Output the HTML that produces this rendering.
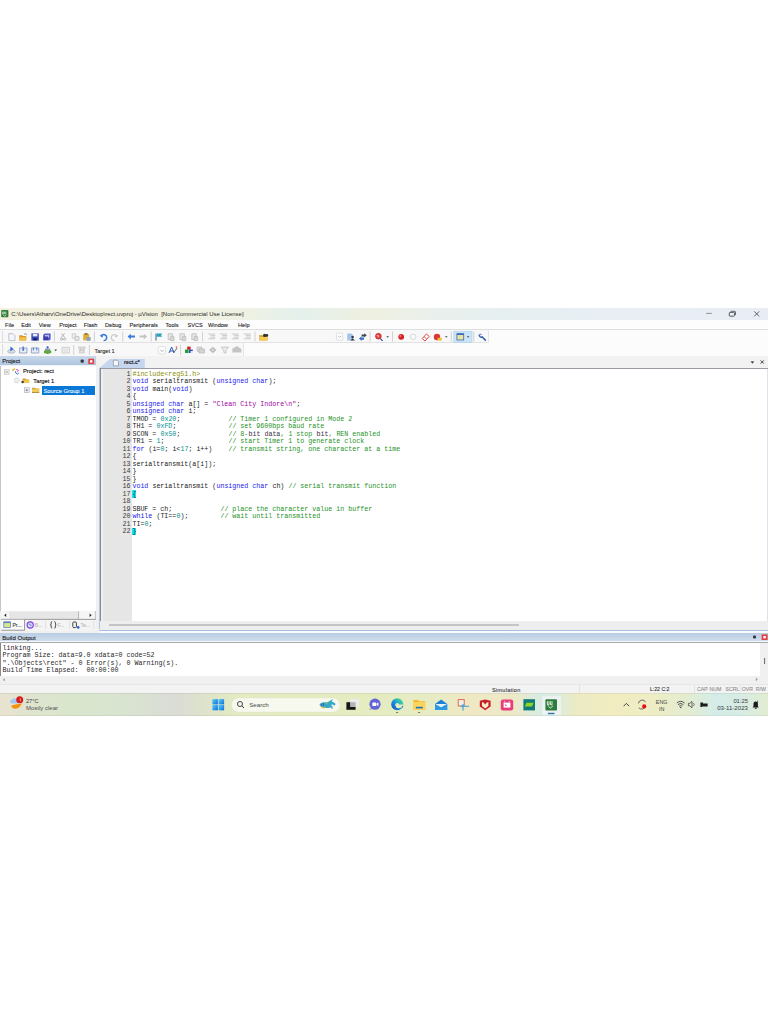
<!DOCTYPE html>
<html><head><meta charset="utf-8">
<style>
*{margin:0;padding:0;box-sizing:border-box}
html,body{width:768px;height:1024px;background:#fff;overflow:hidden}
body{position:relative}
.a{position:absolute}
.t{position:absolute;white-space:pre}
.t.s{-webkit-text-stroke:0.08px currentColor}
svg{position:absolute;overflow:visible}
</style></head><body>
<div class="a" style="left:0px;top:308px;width:768px;height:12px;background:linear-gradient(90deg,#f3f0e0 0.00%,#f2f0de 16.93%,#eef2e4 32.55%,#e4f0ec 39.06%,#eff0e0 48.18%,#eaf0ec 55.99%,#e6eff0 65.10%,#e8eef4 78.12%,#e8edf5 100.00%)"></div>
<div class="a" style="left:0px;top:320px;width:768px;height:9px;background:#fdfdfd"></div>
<div class="a" style="left:0px;top:329px;width:768px;height:1px;background:#dedede"></div>
<div class="a" style="left:0px;top:330px;width:768px;height:27px;background:#fcfcfc"></div>
<div class="a" style="left:0px;top:330px;width:489px;height:13px;background:#f8f8f8;border-right:1px solid #e6e6e6;border-bottom:1px solid #e2e2e2"></div>
<div class="a" style="left:0px;top:343px;width:244px;height:14px;background:#f8f8f8;border-right:1px solid #e6e6e6;border-bottom:1px solid #e2e2e2"></div>
<div class="a" style="left:0px;top:356px;width:768px;height:1px;background:#d2d2d2"></div>
<div class="a" style="left:0px;top:356px;width:768px;height:277px;background:#f0f0f0"></div>
<div class="a" style="left:0px;top:356px;width:96px;height:9px;background:linear-gradient(#cad8ea,#aec6e0)"></div>
<div class="a" style="left:0px;top:365px;width:96px;height:1px;background:#eef2f8"></div>
<div class="a" style="left:0px;top:366px;width:96px;height:245px;background:#fff;border-left:1px solid #c4c4c4"></div>
<div class="a" style="left:98px;top:356px;width:670px;height:12px;background:#f2f2f2"></div>
<div class="a" style="left:99px;top:368px;width:669px;height:1px;background:#9a9aa2"></div>
<div class="a" style="left:99px;top:369px;width:669px;height:260px;background:#fff;border-right:1px solid #dde4ee"></div>
<div class="a" style="left:99px;top:368px;width:1px;height:261px;background:#b4c4e4"></div>
<div class="a" style="left:100px;top:368px;width:1px;height:253px;background:#8c8c94"></div>
<div class="a" style="left:101px;top:369px;width:2px;height:252px;background:#eef0ee"></div>
<div class="a" style="left:103px;top:369px;width:29px;height:252px;background:#e6e6e6"></div>
<div class="a" style="left:100px;top:621px;width:668px;height:9px;background:#eeeeee"></div>
<div class="a" style="left:109px;top:624px;width:410px;height:2px;background:#c4c4c4"></div>
<div class="a" style="left:99px;top:630px;width:669px;height:1px;background:#a8bee0"></div>
<div class="a" style="left:99px;top:631px;width:669px;height:2px;background:#fafafa"></div>
<div class="a" style="left:0px;top:633px;width:768px;height:8px;background:linear-gradient(#b9cce2,#d0deee)"></div>
<div class="a" style="left:0px;top:641px;width:768px;height:1px;background:#f4f8fc"></div>
<div class="a" style="left:0px;top:642px;width:768px;height:1px;background:#a8a8a8"></div>
<div class="a" style="left:0px;top:643px;width:768px;height:33px;background:#fff;border-left:1px solid #888"></div>
<div class="a" style="left:0px;top:676px;width:768px;height:8px;background:#f0f0f0"></div>
<div class="a" style="left:760px;top:643px;width:8px;height:33px;background:#f0f0f0"></div>
<div class="a" style="left:0px;top:684px;width:768px;height:9px;background:#f3f3f3;border-top:1px solid #e6e6e6"></div>
<div class="a" style="left:0px;top:693px;width:768px;height:23px;background:linear-gradient(90deg,#e9e3cf 0.00%,#e0e4cf 3.91%,#d9e6cc 9.11%,#d9e3d0 16.93%,#dadcd6 22.79%,#dee3cb 26.69%,#e3ebc2 31.25%,#e5ecc0 49.48%,#e8ebc4 57.29%,#f0e8c4 61.20%,#ece9c8 67.06%,#d8ece4 70.31%,#dcece0 72.40%,#ebebc4 74.87%,#f2ecc0 79.43%,#ecedc6 85.94%,#e2ecd2 89.84%,#d4ece8 93.10%,#d6ece4 96.35%,#e2ecd2 100.00%)"></div>
<div class="a" style="left:0px;top:693px;width:768px;height:1px;background:rgba(0,0,0,0.06)"></div>
<div class="a" style="left:0px;top:715px;width:768px;height:1px;background:rgba(0,0,0,0.05)"></div>
<svg width="768" height="1024" style="left:0;top:0" viewBox="0 0 768 1024"><rect x="1.2" y="310" width="7.2" height="7.2" rx="0.8" fill="#2e7d3a"/>
<path d="M2.6 311.6v2.2h1.2v-2.2M4.6 311.6v2.2h1.2v-2.2M3 314.6l1.6 1.8l1.8-1.8" stroke="#e8f4e8" stroke-width="0.7" fill="none"/>
<path d="M706.2 313.4h5.6" stroke="#555" stroke-width="0.6"/>
<rect x="729.3" y="312.4" width="5.2" height="3.8" rx="0.8" fill="none" stroke="#333" stroke-width="0.8"/>
<path d="M730.6 311.3h4.2a0.7 0.7 0 0 1 .7 .7v3" fill="none" stroke="#333" stroke-width="0.7"/>
<path d="M754.2 311.4l5 5M759.2 311.4l-5 5" stroke="#333" stroke-width="0.75"/>
<path d="M2.6 331v11M2.6 344v11" stroke="#d4d4d4" stroke-width="0.8"/>
<path d="M54.4 331.5v10" stroke="#c6c6c6" stroke-width="0.8"/>
<path d="M94.4 331.5v10" stroke="#c6c6c6" stroke-width="0.8"/>
<path d="M122.75 331.5v10" stroke="#c6c6c6" stroke-width="0.8"/>
<path d="M151.25 331.5v10" stroke="#c6c6c6" stroke-width="0.8"/>
<path d="M202.5 331.5v10" stroke="#c6c6c6" stroke-width="0.8"/>
<path d="M255 331.5v10" stroke="#c6c6c6" stroke-width="0.8"/>
<path d="M370 331.5v10" stroke="#c6c6c6" stroke-width="0.8"/>
<path d="M392.5 331.5v10" stroke="#c6c6c6" stroke-width="0.8"/>
<path d="M451.25 331.5v10" stroke="#c6c6c6" stroke-width="0.8"/>
<path d="M473.75 331.5v10" stroke="#c6c6c6" stroke-width="0.8"/>
<path d="M8.8 333.6h4.2l2 2v5h-6.2z" fill="#f2f5fa" stroke="#a8b0bc" stroke-width="0.7"/>
<path d="M19.2 335.2h3l0.8 0.8h3.2v4.4h-7z" fill="#d89a2a"/><path d="M19.8 337.2h7.2l-1.2 3.4h-6.6z" fill="#f4c24a"/><path d="M24 334.2l2 -.6l.6 1.6" stroke="#6a8ab0" stroke-width="0.7" fill="none"/>
<rect x="31.4" y="333.4" width="7.4" height="7.2" fill="#3848b8"/><rect x="32.8" y="333.8" width="4.6" height="2.6" fill="#e8ecf8"/><rect x="33.4" y="338" width="3.4" height="2.4" fill="#1a2060"/>
<path d="M44.8 333.4h5.8v5.8l-1.4 1.4h-6v-5.8z" fill="#5a5ad0"/><path d="M45 335.2h4v2.2h-4z" fill="#d8dcf4"/><path d="M43.6 336.4h4.6v3.6h-4.6z" fill="#3a3aa8"/>
<path d="M61.4 333.4l3.6 4.4M64.6 333.4l-3.6 4.4" stroke="#a8a8a8" stroke-width="0.8"/><circle cx="61.6" cy="339.2" r="1.1" fill="none" stroke="#a0a0a0" stroke-width="0.7"/><circle cx="64.6" cy="339.2" r="1.1" fill="none" stroke="#a0a0a0" stroke-width="0.7"/>
<path d="M72.2 333.8h3.6v4.4h-3.6z" fill="#eee" stroke="#b8b8b8" stroke-width="0.6"/><path d="M75 336.4h4v4h-4z" fill="#e6e6e6" stroke="#b0b0b0" stroke-width="0.6"/>
<rect x="83.2" y="334" width="6" height="6.4" fill="#e2b030"/><rect x="84.6" y="333.2" width="3" height="1.4" fill="#6a5a3a"/><rect x="86.6" y="337" width="4" height="3.8" fill="#8aa0c4"/>
<path d="M101 336.2a3 3 0 1 1 2.6 4.4" stroke="#3a78d8" stroke-width="1.4" fill="none"/><path d="M99.6 335.2l2.4 2.6l1.6-2.4z" fill="#3a78d8"/>
<path d="M117 336.2a3 3 0 1 0 -2.6 4.4" stroke="#c8c8c8" stroke-width="1.1" fill="none"/><path d="M118.4 335.2l-2.4 2.6l-1.6-2.4z" fill="#c8c8c8"/>
<path d="M127.6 336.6l3.2-2.8v1.8h4.2v2h-4.2v1.8z" fill="#3a7ad8"/>
<path d="M147 336.6l-3.2-2.8v1.8h-4.2v2h4.2v1.8z" fill="#c4c4c4"/>
<path d="M156 333.6v7" stroke="#2a6a8a" stroke-width="1"/><path d="M156.6 333.6h5.6l-1.2 1.6l1.2 1.6h-5.6z" fill="#2aa0c0"/>
<path d="M168.2 333.8h4.4v5.8h-4.4z" fill="#e8e8e8" stroke="#b4b4b4" stroke-width="0.7"/><path d="M170.6 336.6h3.4v4h-3.4z" fill="#d8d8d8" stroke="#b0b0b0" stroke-width="0.6"/>
<path d="M180 333.8h4.4v5.8h-4.4z" fill="#e8e8e8" stroke="#b4b4b4" stroke-width="0.7"/><path d="M182.4 336.6h3.4v4h-3.4z" fill="#d8d8d8" stroke="#b0b0b0" stroke-width="0.6"/>
<path d="M191.8 333.8h4.4v5.8h-4.4z" fill="#e8e8e8" stroke="#b4b4b4" stroke-width="0.7"/><path d="M194.20000000000002 336.6h3.4v4h-3.4z" fill="#d8d8d8" stroke="#b0b0b0" stroke-width="0.6"/>
<path d="M208.2 334h7M210.2 335.6h5M210.2 337.2h5M208.2 338.8h7" stroke="#b8b8b8" stroke-width="0.7"/>
<path d="M220 334h7M222 335.6h5M222 337.2h5M220 338.8h7" stroke="#b8b8b8" stroke-width="0.7"/>
<path d="M231.8 334h7M233.8 335.6h5M233.8 337.2h5M231.8 338.8h7" stroke="#b8b8b8" stroke-width="0.7"/>
<path d="M243.8 334h7M245.8 335.6h5M245.8 337.2h5M243.8 338.8h7" stroke="#b8b8b8" stroke-width="0.7"/>
<path d="M259.2 335h3l.8 .8h4.6v4.6h-8.4z" fill="#e0a830"/><path d="M259.6 337h8.6l-1 3.4h-7.6z" fill="#f6cc58"/><circle cx="264.6" cy="335.4" r="1.6" fill="#303030"/><circle cx="266.8" cy="335.4" r="1.4" fill="#303030"/>
<rect x="336.4" y="333" width="6.4" height="7.2" rx="1" fill="#fdfdfd" stroke="#d0d0d0" stroke-width="0.6"/><path d="M338.2 336l1.4 1.4l1.4-1.4" stroke="#999" stroke-width="0.6" fill="none"/>
<path d="M347.2 333.4h4.2l1.4 1.4v5.8h-5.6z" fill="#a8c4e8"/><circle cx="352.6" cy="337" r="1.3" fill="#303848"/><path d="M350.4 340.6l2.2-2.4l2.4 2.4z" fill="#303848"/>
<path d="M359 338.6l2.6-2.4v1.4h2.4v2.2h-2.4v1.2z" fill="#3a70d0"/><path d="M366.8 335.2l-2.6-2v1.2h-2.6v2h2.6v1.2z" fill="#404850"/>
<circle cx="378.4" cy="336.2" r="2.9" fill="#e84040" stroke="#b82020" stroke-width="0.6"/><path d="M376.8 335.6h1.6v1.6" stroke="#fff" stroke-width="0.7" fill="none"/><path d="M380.4 338.6l2.2 2.2" stroke="#2a4aa8" stroke-width="1.2"/>
<path d="M386.4 336.2h2.6l-1.3 1.6z" fill="#404040"/>
<circle cx="401.2" cy="336.8" r="2.9" fill="#d82020"/><circle cx="400.4" cy="336" r="1" fill="#f08080"/>
<circle cx="413.2" cy="336.8" r="2.7" fill="#fafafa" stroke="#c0c0c0" stroke-width="0.6"/>
<path d="M422.2 338.6l4.2-4.6l2.8 2.4l-4.2 4.6z" fill="#fff" stroke="#e04848" stroke-width="1"/><path d="M424 336.6l2.8 2.4" stroke="#e04848" stroke-width="0.8"/>
<circle cx="437" cy="337" r="3.2" fill="#d83838"/><path d="M437.6 337.8h4.2v2.8h-4.2z" fill="#f0c030"/>
<path d="M445 336.2h2.6l-1.3 1.6z" fill="#404040"/>
<rect x="453.8" y="331.2" width="18.2" height="11" fill="#cce4f7" stroke="#9ccaf0" stroke-width="0.5"/>
<rect x="456.9" y="333.6" width="6.8" height="6.4" fill="#e8e4a0" stroke="#3a6ab8" stroke-width="0.8"/><path d="M457 334.4h6.6" stroke="#3a6ab8" stroke-width="1.2"/>
<path d="M466.8 336.2h2.6l-1.3 1.6z" fill="#404040"/>
<path d="M479.4 334.6a2 2 0 0 0 2.8 2.4l3.6 3.6" stroke="#3060b0" stroke-width="1.5" fill="none"/><path d="M480.2 333.6l1.2 1.4" stroke="#3060b0" stroke-width="1"/>
<path d="M73.75 345v10" stroke="#c6c6c6" stroke-width="0.8"/>
<path d="M89.4 345v10" stroke="#c6c6c6" stroke-width="0.8"/>
<path d="M180.6 345v10" stroke="#c6c6c6" stroke-width="0.8"/>
<ellipse cx="11.4" cy="351.4" rx="3.8" ry="1.8" fill="#d8dce4" stroke="#9aa4b0" stroke-width="0.6"/><path d="M10.4 346.6l3.2 2.4l-3.2 2.2z" fill="#2a6ad0"/>
<path d="M19.6 348h7.4v5h-7.4z" fill="#e8eef8" stroke="#7a8aa8" stroke-width="0.7"/><path d="M23.2 346.6v4" stroke="#3a6ad0" stroke-width="1.2"/><path d="M21.8 349.4l1.4 1.6l1.4-1.6" fill="#3a6ad0"/>
<path d="M31.4 348h7.4v5h-7.4z" fill="#e8eef8" stroke="#7a8aa8" stroke-width="0.7"/><path d="M33.4 347.4v3M36.8 347.4v3" stroke="#5a8ad8" stroke-width="1.1"/>
<path d="M44 350.8l3.6-2l3.6 2v2.2l-3.6 1l-3.6-1z" fill="#5aa838"/><path d="M45 348.6h5.2v2h-5.2z" fill="#909aa8"/><circle cx="47.6" cy="347.4" r="1.1" fill="#2a60d0"/>
<path d="M54.4 349.6h2.6l-1.3 1.6z" fill="#404040"/>
<rect x="62" y="347.2" width="7.4" height="5.8" fill="#efefef" stroke="#c4c4c4" stroke-width="0.7"/><path d="M63.4 349h4.6M63.4 351h4.6" stroke="#cfcfcf" stroke-width="0.6"/>
<path d="M78.2 347h7.2l-1.2 2.6v3.4h-4.8v-3.4z" fill="#e4e4e4" stroke="#b8b8b8" stroke-width="0.6"/><path d="M80.6 348.2v3M83 348.2v3" stroke="#a8a8a8" stroke-width="0.6"/>
<rect x="158.2" y="346.6" width="7.4" height="7.4" rx="1.2" fill="#fdfdfd" stroke="#cfcfcf" stroke-width="0.6"/><path d="M160.4 350l1.6 1.5l1.6-1.5" stroke="#888" stroke-width="0.6" fill="none"/>
<path d="M169 353l2.6-6l2.6 6M170 351h3.2" stroke="#2a5ab8" stroke-width="1" fill="none"/><path d="M173.6 352.6l3.6-4.6" stroke="#404040" stroke-width="0.8"/><circle cx="176.4" cy="347" r="0.8" fill="#e04040"/>
<rect x="187.2" y="346.6" width="3.4" height="3.2" fill="#d82020"/><rect x="185" y="349.6" width="3.6" height="3.4" fill="#20a030"/><rect x="189" y="349.6" width="3.8" height="3.4" fill="#2a50d0"/><rect x="190.6" y="351" width="2.4" height="2.2" fill="#e8e8f8"/>
<path d="M197 347h5v4.4h-5z" fill="#dcdcdc" stroke="#b8b8b8" stroke-width="0.6"/><path d="M199 349h5.6v4h-5.6z" fill="#d4d4d4" stroke="#b0b0b0" stroke-width="0.6"/>
<path d="M212.8 346.8l3.6 3.2l-3.6 3.2l-3.6-3.2z" fill="#bcbcbc"/><circle cx="212.8" cy="350" r="1" fill="#e8e8e8"/>
<path d="M221.2 347.2h7.2l-2.6 3.2v2.8l-2-.8v-2z" fill="#f0f0f0" stroke="#b0b0b0" stroke-width="0.7"/>
<path d="M232.4 352.6v-2.6a2 2 0 0 1 2.6-2.4a2.2 2.2 0 0 1 4.2 .4a1.8 1.8 0 0 1 2.2 2v2.6z" fill="#c4c4c4"/>
<rect x="80.6" y="359.6" width="3.2" height="3.2" rx="1" fill="#303840"/>
<rect x="88.3" y="358.7" width="5.8" height="5.4" fill="#e04040"/><rect x="90" y="360.2" width="2.4" height="2.4" fill="#fff"/>
<path d="M99.3 368l10.7-9h34.8v9z" fill="#c7d6ef"/>
<path d="M113.4 360.2h3.6l1.4 1.4v4.2h-5z" fill="#fafafa" stroke="#6e7c90" stroke-width="0.6"/>
<path d="M750.6 361.6h3.6l-1.8 1.8z" fill="#1a1a1a"/>
<path d="M760.6 360.4l3.2 3.2M763.8 360.4l-3.2 3.2" stroke="#1a1a1a" stroke-width="0.8"/>
<rect x="4.3" y="369.8" width="4.8" height="4.4" fill="#f4f4f4" stroke="#b4b4b4" stroke-width="0.6"/><path d="M5.4 372h2.6" stroke="#666" stroke-width="0.6"/>
<path d="M12.2 370.6l2.8-2" stroke="#f0b818" stroke-width="1.3"/><path d="M16.2 369.4l2.4 1l-1.4 1.4" stroke="#d040d8" stroke-width="1" fill="none"/><path d="M15.6 371.2v1.6l1.8 1.2l1.4-1" stroke="#2a70d8" stroke-width="1" fill="none"/>
<circle cx="16.8" cy="380.4" r="2.5" fill="#f0f0f0" stroke="#c8c8c8" stroke-width="0.6"/>
<path d="M22.6 378.6h3l.8 .8h2.6v3.6h-6.4z" fill="#d8a028"/><path d="M23 380.2h6.4v2.8h-6.4z" fill="#f2c84a"/><circle cx="22.6" cy="382" r="1.3" fill="#404040"/>
<rect x="24.4" y="387.8" width="4.8" height="4.8" fill="#f4f4f4" stroke="#a4a4b4" stroke-width="0.6"/><path d="M25.6 390.2h2.4M26.8 389v2.4" stroke="#4a5a9a" stroke-width="0.6"/>
<path d="M32 387.8h3l.8 .8h3.4v4.2h-7.2z" fill="#d8a830"/><path d="M32 389.4h7.2v3.4h-7.2z" fill="#f4d060"/><path d="M32 392.4h7.2" stroke="#7a6020" stroke-width="0.6"/>
<rect x="1" y="611.2" width="95" height="8" fill="#f6f6f6"/>
<rect x="10.2" y="611.4" width="68.4" height="7.6" fill="#e6e6e6"/><path d="M78.6 611.4v7.6" stroke="#a8a8a8" stroke-width="0.8"/><path d="M10.2 611.4v7.6" stroke="#d0d0d0" stroke-width="0.6"/>
<path d="M6.2 613.4v3.6l-2-1.8z" fill="#202020"/><path d="M89.6 613.4v3.6l2-1.8z" fill="#202020"/>
<path d="M1 619.4h95" stroke="#6a6a6a" stroke-width="0.8"/><path d="M95.4 611v8.6" stroke="#a0a0a0" stroke-width="0.6"/>
<rect x="1" y="619.8" width="95" height="11" fill="#f4f4f4"/>
<rect x="1.4" y="619.8" width="22.8" height="10.4" fill="#fbfbfb"/><path d="M1.4 630.2h23.2v-10.4" stroke="#6a6a6a" stroke-width="0.7" fill="none"/>
<rect x="3.8" y="621.8" width="6.6" height="5.8" fill="#d8e890" stroke="#4a70c0" stroke-width="0.7"/><path d="M3.8 622.6h6.6" stroke="#4a70c0" stroke-width="0.9"/>
<circle cx="30.2" cy="625" r="3.1" fill="#c8d8f8" stroke="#8a40e0" stroke-width="1.2"/><path d="M29.2 623.8l2 2" stroke="#3050c0" stroke-width="0.8"/>
<path d="M45.6 621v8M69.6 621v8M93.8 621v8" stroke="#d0d0d0" stroke-width="0.6"/>
<path d="M52.2 621.6q-1 0 -1 1v1.4q0 .8 -.8 .9q.8 .1 .8 .9v1.4q0 1 1 1M54.4 621.6q1 0 1 1v1.4q0 .8 .8 .9q-.8 .1 -.8 .9v1.4q0 1 -1 1" stroke="#3a3a3a" stroke-width="0.9" fill="none"/>
<rect x="72.8" y="622" width="3.6" height="5.6" rx="1" fill="none" stroke="#303030" stroke-width="0.9"/><circle cx="78.2" cy="627.4" r="1.3" fill="#2a60d0"/>
<rect x="753" y="635.4" width="3" height="3" rx="1" fill="#303840"/>
<rect x="761.6" y="634.4" width="6" height="5.6" fill="#e04040"/><rect x="763.4" y="636" width="2.4" height="2.4" fill="#fff"/>
<path d="M4.8 678l-2 1.8l2 1.8z" fill="#a0a0a0"/>
<path d="M755.8 677.6l2 1.8l-2 1.8z" fill="#a0a0a0"/>
<path d="M764.6 658v6" stroke="#404040" stroke-width="0.8"/>
<path d="M579.5 685v8M694.5 685v8M740.3 685v8" stroke="#d8d8d8" stroke-width="0.6"/><path d="M10.2 702a2 2 0 0 1 2.2-2.4a2.6 2.6 0 0 1 4.8 .8a1.6 1.6 0 0 1 -.4 3.2h-5.2a1.6 1.6 0 0 1 -1.4-1.6z" fill="#a4c8f4"/>
<path d="M11 706C12.6 709.8 19.6 710.2 21.8 703C19.6 704.8 14.8 703.6 11 706z" fill="#f5900c"/>
<circle cx="19.7" cy="699.8" r="3.5" fill="#d41a1a"/><path d="M20.3 698.2v3" stroke="#f8b0b0" stroke-width="0.9"/>
<defs><linearGradient id="wg" x1="0" y1="0" x2="1" y2="1"><stop offset="0" stop-color="#5ccbfa"/><stop offset="1" stop-color="#0a6fd8"/></linearGradient></defs>
<rect x="212.4" y="699.1" width="5.5" height="5.3" fill="url(#wg)"/><rect x="218.6" y="699.1" width="5.5" height="5.3" fill="url(#wg)"/><rect x="212.4" y="705" width="5.5" height="5.3" fill="url(#wg)"/><rect x="218.6" y="705" width="5.5" height="5.3" fill="url(#wg)"/>
<rect x="231.4" y="697.9" width="108.6" height="14.2" rx="7.1" fill="#f7f9ee" stroke="#e0e6cc" stroke-width="0.5"/>
<circle cx="240" cy="704" r="2.5" fill="none" stroke="#333" stroke-width="0.9"/><path d="M241.8 705.8l2.2 2.2" stroke="#333" stroke-width="1"/>
<path d="M319.4 704.4q2-2.6 6-2.2q3 .2 5-1.6l2.4-1.6l-1 2.4q2.2 .8 4 2.6q-1.4 2 -3.6 2.6l.6 2.6l-2.4-1.8q-3 1 -6 .6q-3.4-.6 -5-3.6z" fill="#38a8c4"/>
<path d="M320.2 705.6l2.4 2.4l3-.4" stroke="#f0c020" stroke-width="1" fill="none"/><path d="M321.4 703.4v3M323.4 703v3" stroke="#2a50c8" stroke-width="0.8"/><path d="M325.6 703.6l2.4-1" stroke="#c8d040" stroke-width="0.7"/><ellipse cx="332.6" cy="705.4" rx="1.3" ry="0.8" fill="#f4f8ec"/>
<rect x="346.4" y="702.2" width="9.2" height="7.6" fill="#161616"/><rect x="350.4" y="699" width="8.6" height="7.8" fill="#ececec"/><rect x="350.4" y="702.2" width="5.2" height="4.6" fill="#b4b4b4"/>
<circle cx="375" cy="704.2" r="5.6" fill="#6264d8"/><path d="M370 708.6l-.6 1.2l2.4-.8z" fill="#6264d8"/><rect x="372.4" y="702.6" width="3.8" height="3.4" rx="0.6" fill="#fff"/><path d="M376.6 703.6l1.8-1v3.4l-1.8-1z" fill="#fff"/>
<defs><linearGradient id="eg" x1="0" y1="1" x2="1" y2="0"><stop offset="0" stop-color="#0a4fb0"/><stop offset="0.45" stop-color="#1a8ee0"/><stop offset="0.7" stop-color="#30c0b0"/><stop offset="1" stop-color="#50e060"/></linearGradient></defs>
<circle cx="397.2" cy="704.3" r="6" fill="url(#eg)"/>
<path d="M396.4 703.2a1.9 1.9 0 0 1 2.6 1.2h4.6l-.6 2.2l-2 1.2l-2.6.4a2.4 2.4 0 0 1 -2.6-2.2a1.6 1.6 0 0 1 .6-2.8z" fill="#e6ecc2"/>
<path d="M401.2 707.2l2.2-1.6l-.8 2z" fill="#1a50b0"/>
<rect x="396" y="712" width="2.2" height="1" rx="0.5" fill="#707070"/>
<path d="M413.4 700h4.4l1 1.2h6.4v8.8h-11.8z" fill="#f2b830"/><rect x="413.4" y="702" width="11.8" height="8" fill="#fcd45c"/><rect x="415.8" y="706.8" width="7" height="1.6" fill="#1a70c8"/>
<rect x="418" y="712" width="2.2" height="1" rx="0.5" fill="#707070"/>
<path d="M435 704l6.1-4.6l6.1 4.6v6h-12.2z" fill="#1a80d8"/><path d="M435 704l6.1 3.6l6.1-3.6" fill="#e8f0f8"/><path d="M435 704.2v5.8h12.2v-5.8l-6.1 3.8z" fill="#2a9ae8"/>
<rect x="458.2" y="699.6" width="6" height="6.4" fill="#f0f0f0" stroke="#e06040" stroke-width="0.9"/><path d="M463 704v6.4M460.4 706.2h8.6" stroke="#30a0e0" stroke-width="1.1"/>
<path d="M479.8 700.8l5.4-1.4l5.4 1.4v5.6l-5.4 3.8l-5.4-3.8z" fill="#c8202a"/><path d="M482 702v4l3.2 2.4l3.2-2.4v-4l-1.8 .8l-1.4 1.6l-1.4-1.6z" fill="#f4ecc8"/>
<rect x="500.8" y="699.4" width="12.4" height="11" rx="2.2" fill="#e83e7a"/><rect x="503.6" y="702.6" width="6.8" height="5" fill="#fff"/><path d="M505.2 704.2l2 1l-2 1z" fill="#e83e7a"/><path d="M504 700.8l1 1.6M509.8 700.8l-1 1.6" stroke="#fff" stroke-width="0.6"/>
<rect x="523.4" y="699.2" width="11.6" height="11.2" fill="#137a7a"/><path d="M524.8 706.4l1.6-3.6h7.2l-1.6 3.6z" fill="#8ad820"/>
<rect x="542.2" y="696.3" width="18.8" height="18.7" rx="1.5" fill="#f2f6f8" fill-opacity="0.75"/>
<rect x="545.4" y="699.2" width="11.6" height="11.2" rx="1" fill="#2e7d3a"/><path d="M547.4 701.2v3.6h1.6v-3.6M550.4 701.2v3.6h1.6v-3.6M548 705.6l2.4 2.6l2.8-2.6" stroke="#eaf4ea" stroke-width="0.9" fill="none"/>
<rect x="547.7" y="712.8" width="7" height="1.4" rx="0.7" fill="#3a78a8"/>
<path d="M623.6 706.2l2.8-2.8l2.8 2.8" stroke="#303030" stroke-width="0.9" fill="none"/>
<path d="M638.4 703.4a4 4 0 0 1 7.2 -1.6M645.6 706a4 4 0 0 1 -6.8 1.8" stroke="#404040" stroke-width="0.8" fill="none"/><circle cx="644.2" cy="706.4" r="2.1" fill="#e81010"/>
<path d="M676.8 703a6 6 0 0 1 7.8 0M678 704.6a4 4 0 0 1 5.4 0M679.2 706.2a2 2 0 0 1 3 0" stroke="#303030" stroke-width="0.8" fill="none"/><circle cx="680.7" cy="707.4" r="0.7" fill="#303030"/>
<path d="M688.4 703.4h1.4l2.2-2v6.4l-2.2-2h-1.4z" fill="none" stroke="#303030" stroke-width="0.7"/><path d="M693.4 703a2 2 0 0 1 0 3" stroke="#303030" stroke-width="0.6" fill="none"/>
<path d="M700.4 702.6h2.6v1h4.6v2.8h-5.2l-.8 .6h-1.2z" fill="#1a1a1a"/>
<path d="M752.6 707.4h6.2l-.9-1.2v-2.6a2.2 2.2 0 0 0 -4.4 0v2.6z" fill="#1a1a1a"/><rect x="754.8" y="707.8" width="1.8" height="1" fill="#1a1a1a"/><path d="M757.6 700.6v2.4" stroke="#1a1a1a" stroke-width="0.6"/></svg>
<div class="t s" style="left:11.3px;top:310.80px;font-size:5.96px;line-height:6.66px;color:#2a2a2a;font-family:'Liberation Sans',sans-serif;-webkit-text-stroke:0;">C:\Users\Atharv\OneDrive\Desktop\rect.uvproj - µVision&nbsp;&nbsp;[Non-Commercial Use License]</div>
<div class="t s" style="left:5px;top:321.73px;font-size:5.6px;line-height:6.26px;color:#161622;font-family:'Liberation Sans',sans-serif;">File</div>
<div class="t s" style="left:21.2px;top:321.73px;font-size:5.6px;line-height:6.26px;color:#161622;font-family:'Liberation Sans',sans-serif;">Edit</div>
<div class="t s" style="left:38.7px;top:321.73px;font-size:5.6px;line-height:6.26px;color:#161622;font-family:'Liberation Sans',sans-serif;">View</div>
<div class="t s" style="left:59.2px;top:321.73px;font-size:5.6px;line-height:6.26px;color:#161622;font-family:'Liberation Sans',sans-serif;">Project</div>
<div class="t s" style="left:83.8px;top:321.73px;font-size:5.6px;line-height:6.26px;color:#161622;font-family:'Liberation Sans',sans-serif;">Flash</div>
<div class="t s" style="left:105px;top:321.73px;font-size:5.6px;line-height:6.26px;color:#161622;font-family:'Liberation Sans',sans-serif;">Debug</div>
<div class="t s" style="left:129.5px;top:321.73px;font-size:5.6px;line-height:6.26px;color:#161622;font-family:'Liberation Sans',sans-serif;">Peripherals</div>
<div class="t s" style="left:165.5px;top:321.73px;font-size:5.6px;line-height:6.26px;color:#161622;font-family:'Liberation Sans',sans-serif;">Tools</div>
<div class="t s" style="left:187.5px;top:321.73px;font-size:5.6px;line-height:6.26px;color:#161622;font-family:'Liberation Sans',sans-serif;">SVCS</div>
<div class="t s" style="left:208px;top:321.73px;font-size:5.6px;line-height:6.26px;color:#161622;font-family:'Liberation Sans',sans-serif;">Window</div>
<div class="t s" style="left:238px;top:321.73px;font-size:5.6px;line-height:6.26px;color:#161622;font-family:'Liberation Sans',sans-serif;">Help</div>
<div class="t" style="right:637.4px;top:370.95px;font-size:6.667px;line-height:7.55px;color:#383838;font-family:'Liberation Mono',monospace;">1</div>
<div class="t" style="left:132.4px;top:370.95px;font-size:6.667px;line-height:7.55px;color:#8c8c00;font-family:'Liberation Mono',monospace;">#include&lt;reg51.h&gt;</div>
<div class="t" style="right:637.4px;top:378.44px;font-size:6.667px;line-height:7.55px;color:#383838;font-family:'Liberation Mono',monospace;">2</div>
<div class="t" style="left:132.4px;top:378.44px;font-size:6.667px;line-height:7.55px;color:#2020f0;font-family:'Liberation Mono',monospace;">void</div>
<div class="t" style="left:148.4px;top:378.44px;font-size:6.667px;line-height:7.55px;color:#1a1a1a;font-family:'Liberation Mono',monospace;">&nbsp;serialtransmit&nbsp;(</div>
<div class="t" style="left:216.4px;top:378.44px;font-size:6.667px;line-height:7.55px;color:#2020f0;font-family:'Liberation Mono',monospace;">unsigned&nbsp;char</div>
<div class="t" style="left:268.4px;top:378.44px;font-size:6.667px;line-height:7.55px;color:#1a1a1a;font-family:'Liberation Mono',monospace;">);</div>
<div class="t" style="right:637.4px;top:385.93px;font-size:6.667px;line-height:7.55px;color:#383838;font-family:'Liberation Mono',monospace;">3</div>
<div class="t" style="left:132.4px;top:385.93px;font-size:6.667px;line-height:7.55px;color:#2020f0;font-family:'Liberation Mono',monospace;">void</div>
<div class="t" style="left:148.4px;top:385.93px;font-size:6.667px;line-height:7.55px;color:#1a1a1a;font-family:'Liberation Mono',monospace;">&nbsp;main(</div>
<div class="t" style="left:172.4px;top:385.93px;font-size:6.667px;line-height:7.55px;color:#2020f0;font-family:'Liberation Mono',monospace;">void</div>
<div class="t" style="left:188.4px;top:385.93px;font-size:6.667px;line-height:7.55px;color:#1a1a1a;font-family:'Liberation Mono',monospace;">)</div>
<div class="t" style="right:637.4px;top:393.42px;font-size:6.667px;line-height:7.55px;color:#383838;font-family:'Liberation Mono',monospace;">4</div>
<div class="t" style="left:132.4px;top:393.42px;font-size:6.667px;line-height:7.55px;color:#1a1a1a;font-family:'Liberation Mono',monospace;">{</div>
<div class="t" style="right:637.4px;top:400.91px;font-size:6.667px;line-height:7.55px;color:#383838;font-family:'Liberation Mono',monospace;">5</div>
<div class="t" style="left:132.4px;top:400.91px;font-size:6.667px;line-height:7.55px;color:#2020f0;font-family:'Liberation Mono',monospace;">unsigned&nbsp;char</div>
<div class="t" style="left:184.4px;top:400.91px;font-size:6.667px;line-height:7.55px;color:#1a1a1a;font-family:'Liberation Mono',monospace;">&nbsp;a[]&nbsp;=&nbsp;</div>
<div class="t" style="left:212.4px;top:400.91px;font-size:6.667px;line-height:7.55px;color:#a000a0;font-family:'Liberation Mono',monospace;">"Clean&nbsp;City&nbsp;Indore\n"</div>
<div class="t" style="left:296.4px;top:400.91px;font-size:6.667px;line-height:7.55px;color:#1a1a1a;font-family:'Liberation Mono',monospace;">;</div>
<div class="t" style="right:637.4px;top:408.40px;font-size:6.667px;line-height:7.55px;color:#383838;font-family:'Liberation Mono',monospace;">6</div>
<div class="t" style="left:132.4px;top:408.40px;font-size:6.667px;line-height:7.55px;color:#2020f0;font-family:'Liberation Mono',monospace;">unsigned&nbsp;char</div>
<div class="t" style="left:184.4px;top:408.40px;font-size:6.667px;line-height:7.55px;color:#1a1a1a;font-family:'Liberation Mono',monospace;">&nbsp;i;</div>
<div class="t" style="right:637.4px;top:415.89px;font-size:6.667px;line-height:7.55px;color:#383838;font-family:'Liberation Mono',monospace;">7</div>
<div class="t" style="left:132.4px;top:415.89px;font-size:6.667px;line-height:7.55px;color:#1a1a1a;font-family:'Liberation Mono',monospace;">TMOD&nbsp;=&nbsp;</div>
<div class="t" style="left:160.4px;top:415.89px;font-size:6.667px;line-height:7.55px;color:#009090;font-family:'Liberation Mono',monospace;">0x20</div>
<div class="t" style="left:176.4px;top:415.89px;font-size:6.667px;line-height:7.55px;color:#1a1a1a;font-family:'Liberation Mono',monospace;">;</div>
<div class="t" style="left:228.4px;top:415.89px;font-size:6.667px;line-height:7.55px;color:#259225;font-family:'Liberation Mono',monospace;">//&nbsp;Timer&nbsp;1&nbsp;configured&nbsp;in&nbsp;Mode&nbsp;2</div>
<div class="t" style="right:637.4px;top:423.38px;font-size:6.667px;line-height:7.55px;color:#383838;font-family:'Liberation Mono',monospace;">8</div>
<div class="t" style="left:132.4px;top:423.38px;font-size:6.667px;line-height:7.55px;color:#1a1a1a;font-family:'Liberation Mono',monospace;">TH1&nbsp;=&nbsp;</div>
<div class="t" style="left:156.4px;top:423.38px;font-size:6.667px;line-height:7.55px;color:#009090;font-family:'Liberation Mono',monospace;">0xFD</div>
<div class="t" style="left:172.4px;top:423.38px;font-size:6.667px;line-height:7.55px;color:#1a1a1a;font-family:'Liberation Mono',monospace;">;</div>
<div class="t" style="left:228.4px;top:423.38px;font-size:6.667px;line-height:7.55px;color:#259225;font-family:'Liberation Mono',monospace;">//&nbsp;set&nbsp;9600bps&nbsp;baud&nbsp;rate</div>
<div class="t" style="right:637.4px;top:430.87px;font-size:6.667px;line-height:7.55px;color:#383838;font-family:'Liberation Mono',monospace;">9</div>
<div class="t" style="left:132.4px;top:430.87px;font-size:6.667px;line-height:7.55px;color:#1a1a1a;font-family:'Liberation Mono',monospace;">SCON&nbsp;=&nbsp;</div>
<div class="t" style="left:160.4px;top:430.87px;font-size:6.667px;line-height:7.55px;color:#009090;font-family:'Liberation Mono',monospace;">0x50</div>
<div class="t" style="left:176.4px;top:430.87px;font-size:6.667px;line-height:7.55px;color:#1a1a1a;font-family:'Liberation Mono',monospace;">;</div>
<div class="t" style="left:228.4px;top:430.87px;font-size:6.667px;line-height:7.55px;color:#259225;font-family:'Liberation Mono',monospace;">//&nbsp;8-</div>
<div class="t" style="left:248.4px;top:430.87px;font-size:6.667px;line-height:7.55px;color:#3a3048;font-family:'Liberation Mono',monospace;">bit</div>
<div class="t" style="left:260.4px;top:430.87px;font-size:6.667px;line-height:7.55px;color:#259225;font-family:'Liberation Mono',monospace;">&nbsp;</div>
<div class="t" style="left:264.4px;top:430.87px;font-size:6.667px;line-height:7.55px;color:#3a3048;font-family:'Liberation Mono',monospace;">data</div>
<div class="t" style="left:280.4px;top:430.87px;font-size:6.667px;line-height:7.55px;color:#259225;font-family:'Liberation Mono',monospace;">,&nbsp;1&nbsp;stop&nbsp;</div>
<div class="t" style="left:316.4px;top:430.87px;font-size:6.667px;line-height:7.55px;color:#3a3048;font-family:'Liberation Mono',monospace;">bit</div>
<div class="t" style="left:328.4px;top:430.87px;font-size:6.667px;line-height:7.55px;color:#259225;font-family:'Liberation Mono',monospace;">,&nbsp;REN&nbsp;enabled</div>
<div class="t" style="right:637.4px;top:438.36px;font-size:6.667px;line-height:7.55px;color:#383838;font-family:'Liberation Mono',monospace;">10</div>
<div class="t" style="left:132.4px;top:438.36px;font-size:6.667px;line-height:7.55px;color:#1a1a1a;font-family:'Liberation Mono',monospace;">TR1&nbsp;=&nbsp;</div>
<div class="t" style="left:156.4px;top:438.36px;font-size:6.667px;line-height:7.55px;color:#009090;font-family:'Liberation Mono',monospace;">1</div>
<div class="t" style="left:160.4px;top:438.36px;font-size:6.667px;line-height:7.55px;color:#1a1a1a;font-family:'Liberation Mono',monospace;">;</div>
<div class="t" style="left:228.4px;top:438.36px;font-size:6.667px;line-height:7.55px;color:#259225;font-family:'Liberation Mono',monospace;">//&nbsp;start&nbsp;Timer&nbsp;1&nbsp;to&nbsp;generate&nbsp;clock</div>
<div class="t" style="right:637.4px;top:445.85px;font-size:6.667px;line-height:7.55px;color:#383838;font-family:'Liberation Mono',monospace;">11</div>
<div class="t" style="left:132.4px;top:445.85px;font-size:6.667px;line-height:7.55px;color:#2020f0;font-family:'Liberation Mono',monospace;">for</div>
<div class="t" style="left:144.4px;top:445.85px;font-size:6.667px;line-height:7.55px;color:#1a1a1a;font-family:'Liberation Mono',monospace;">&nbsp;(i=</div>
<div class="t" style="left:160.4px;top:445.85px;font-size:6.667px;line-height:7.55px;color:#009090;font-family:'Liberation Mono',monospace;">0</div>
<div class="t" style="left:164.4px;top:445.85px;font-size:6.667px;line-height:7.55px;color:#1a1a1a;font-family:'Liberation Mono',monospace;">;&nbsp;i&lt;</div>
<div class="t" style="left:180.4px;top:445.85px;font-size:6.667px;line-height:7.55px;color:#009090;font-family:'Liberation Mono',monospace;">17</div>
<div class="t" style="left:188.4px;top:445.85px;font-size:6.667px;line-height:7.55px;color:#1a1a1a;font-family:'Liberation Mono',monospace;">;&nbsp;i++)</div>
<div class="t" style="left:228.4px;top:445.85px;font-size:6.667px;line-height:7.55px;color:#259225;font-family:'Liberation Mono',monospace;">//&nbsp;transmit&nbsp;string,&nbsp;one&nbsp;character&nbsp;at&nbsp;a&nbsp;time</div>
<div class="t" style="right:637.4px;top:453.34px;font-size:6.667px;line-height:7.55px;color:#383838;font-family:'Liberation Mono',monospace;">12</div>
<div class="t" style="left:132.4px;top:453.34px;font-size:6.667px;line-height:7.55px;color:#1a1a1a;font-family:'Liberation Mono',monospace;">{</div>
<div class="t" style="right:637.4px;top:460.83px;font-size:6.667px;line-height:7.55px;color:#383838;font-family:'Liberation Mono',monospace;">13</div>
<div class="t" style="left:132.4px;top:460.83px;font-size:6.667px;line-height:7.55px;color:#1a1a1a;font-family:'Liberation Mono',monospace;">serialtransmit(a[i]);</div>
<div class="t" style="right:637.4px;top:468.32px;font-size:6.667px;line-height:7.55px;color:#383838;font-family:'Liberation Mono',monospace;">14</div>
<div class="t" style="left:132.4px;top:468.32px;font-size:6.667px;line-height:7.55px;color:#1a1a1a;font-family:'Liberation Mono',monospace;">}</div>
<div class="t" style="right:637.4px;top:475.81px;font-size:6.667px;line-height:7.55px;color:#383838;font-family:'Liberation Mono',monospace;">15</div>
<div class="t" style="left:132.4px;top:475.81px;font-size:6.667px;line-height:7.55px;color:#1a1a1a;font-family:'Liberation Mono',monospace;">}</div>
<div class="t" style="right:637.4px;top:483.30px;font-size:6.667px;line-height:7.55px;color:#383838;font-family:'Liberation Mono',monospace;">16</div>
<div class="t" style="left:132.4px;top:483.30px;font-size:6.667px;line-height:7.55px;color:#2020f0;font-family:'Liberation Mono',monospace;">void</div>
<div class="t" style="left:148.4px;top:483.30px;font-size:6.667px;line-height:7.55px;color:#1a1a1a;font-family:'Liberation Mono',monospace;">&nbsp;serialtransmit&nbsp;(</div>
<div class="t" style="left:216.4px;top:483.30px;font-size:6.667px;line-height:7.55px;color:#2020f0;font-family:'Liberation Mono',monospace;">unsigned&nbsp;char</div>
<div class="t" style="left:268.4px;top:483.30px;font-size:6.667px;line-height:7.55px;color:#1a1a1a;font-family:'Liberation Mono',monospace;">&nbsp;ch)&nbsp;</div>
<div class="t" style="left:288.4px;top:483.30px;font-size:6.667px;line-height:7.55px;color:#259225;font-family:'Liberation Mono',monospace;">//&nbsp;serial&nbsp;transmit&nbsp;function</div>
<div class="t" style="right:637.4px;top:490.79px;font-size:6.667px;line-height:7.55px;color:#383838;font-family:'Liberation Mono',monospace;">17</div>
<div class="a" style="left:132.1px;top:490.14000000000004px;width:4.3px;height:7.6px;background:#18e2ee"></div>
<div class="t" style="left:132.4px;top:490.79px;font-size:6.667px;line-height:7.55px;color:#104a30;font-family:'Liberation Mono',monospace;">{</div>
<div class="t" style="right:637.4px;top:498.28px;font-size:6.667px;line-height:7.55px;color:#383838;font-family:'Liberation Mono',monospace;">18</div>
<div class="t" style="right:637.4px;top:505.77px;font-size:6.667px;line-height:7.55px;color:#383838;font-family:'Liberation Mono',monospace;">19</div>
<div class="t" style="left:132.4px;top:505.77px;font-size:6.667px;line-height:7.55px;color:#1a1a1a;font-family:'Liberation Mono',monospace;">SBUF&nbsp;=&nbsp;ch;</div>
<div class="t" style="left:220.4px;top:505.77px;font-size:6.667px;line-height:7.55px;color:#259225;font-family:'Liberation Mono',monospace;">//&nbsp;place&nbsp;the&nbsp;character&nbsp;value&nbsp;in&nbsp;buffer</div>
<div class="t" style="right:637.4px;top:513.26px;font-size:6.667px;line-height:7.55px;color:#383838;font-family:'Liberation Mono',monospace;">20</div>
<div class="t" style="left:132.4px;top:513.26px;font-size:6.667px;line-height:7.55px;color:#2020f0;font-family:'Liberation Mono',monospace;">while</div>
<div class="t" style="left:152.4px;top:513.26px;font-size:6.667px;line-height:7.55px;color:#1a1a1a;font-family:'Liberation Mono',monospace;">&nbsp;(TI==</div>
<div class="t" style="left:176.4px;top:513.26px;font-size:6.667px;line-height:7.55px;color:#009090;font-family:'Liberation Mono',monospace;">0</div>
<div class="t" style="left:180.4px;top:513.26px;font-size:6.667px;line-height:7.55px;color:#1a1a1a;font-family:'Liberation Mono',monospace;">);</div>
<div class="t" style="left:220.4px;top:513.26px;font-size:6.667px;line-height:7.55px;color:#259225;font-family:'Liberation Mono',monospace;">//&nbsp;wait&nbsp;until&nbsp;transmitted</div>
<div class="t" style="right:637.4px;top:520.75px;font-size:6.667px;line-height:7.55px;color:#383838;font-family:'Liberation Mono',monospace;">21</div>
<div class="t" style="left:132.4px;top:520.75px;font-size:6.667px;line-height:7.55px;color:#1a1a1a;font-family:'Liberation Mono',monospace;">TI=</div>
<div class="t" style="left:144.4px;top:520.75px;font-size:6.667px;line-height:7.55px;color:#009090;font-family:'Liberation Mono',monospace;">0</div>
<div class="t" style="left:148.4px;top:520.75px;font-size:6.667px;line-height:7.55px;color:#1a1a1a;font-family:'Liberation Mono',monospace;">;</div>
<div class="t" style="right:637.4px;top:528.24px;font-size:6.667px;line-height:7.55px;color:#383838;font-family:'Liberation Mono',monospace;">22</div>
<div class="a" style="left:132.1px;top:527.5899999999999px;width:4.3px;height:7.6px;background:#18e2ee"></div>
<div class="t" style="left:132.4px;top:528.24px;font-size:6.667px;line-height:7.55px;color:#104a30;font-family:'Liberation Mono',monospace;">}</div>
<div class="t" style="left:2.6px;top:644.85px;font-size:6.667px;line-height:7.55px;color:#282828;font-family:'Liberation Mono',monospace;">linking...</div>
<div class="t" style="left:2.6px;top:652.35px;font-size:6.667px;line-height:7.55px;color:#282828;font-family:'Liberation Mono',monospace;">Program&nbsp;Size:&nbsp;data=9.0&nbsp;xdata=0&nbsp;code=52</div>
<div class="t" style="left:2.6px;top:659.85px;font-size:6.667px;line-height:7.55px;color:#282828;font-family:'Liberation Mono',monospace;">".\Objects\rect"&nbsp;-&nbsp;0&nbsp;Error(s),&nbsp;0&nbsp;Warning(s).</div>
<div class="t" style="left:2.6px;top:667.35px;font-size:6.667px;line-height:7.55px;color:#282828;font-family:'Liberation Mono',monospace;">Build&nbsp;Time&nbsp;Elapsed:&nbsp;&nbsp;00:00:00</div>
<div class="t s" style="left:2.2px;top:357.95px;font-size:5.8px;line-height:6.48px;color:#1a1a1a;font-family:'Liberation Sans',sans-serif;-webkit-text-stroke:0.12px currentColor;">Project</div>
<div class="t s" style="left:2.3px;top:634.70px;font-size:6.07px;line-height:6.78px;color:#1a1a1a;font-family:'Liberation Sans',sans-serif;-webkit-text-stroke:0.12px currentColor;">Build&nbsp;Output</div>
<div class="t s" style="left:22.9px;top:368.35px;font-size:5.8px;line-height:6.48px;color:#141414;font-family:'Liberation Sans',sans-serif;-webkit-text-stroke:0.14px currentColor;">Project:&nbsp;rect</div>
<div class="t s" style="left:33.3px;top:377.95px;font-size:5.8px;line-height:6.48px;color:#141414;font-family:'Liberation Sans',sans-serif;-webkit-text-stroke:0.14px currentColor;">Target&nbsp;1</div>
<div class="a" style="left:41.8px;top:386.4px;width:53px;height:8.6px;background:#0a78d7"></div>
<div class="t s" style="left:43.5px;top:387.65px;font-size:5.8px;line-height:6.48px;color:#fff;font-family:'Liberation Sans',sans-serif;">Source&nbsp;Group&nbsp;1</div>
<div class="t s" style="left:94.4px;top:347.83px;font-size:5.6px;line-height:6.26px;color:#1e1a1a;font-family:'Liberation Sans',sans-serif;">Target&nbsp;1</div>
<div class="t s" style="left:124px;top:360.09px;font-size:5.2px;line-height:5.81px;color:#1a1a1a;font-family:'Liberation Sans',sans-serif;font-weight:bold">rect.c*</div>
<div class="t s" style="left:12.4px;top:622.89px;font-size:5.2px;line-height:5.81px;color:#303030;font-family:'Liberation Sans',sans-serif;">Pr...</div>
<div class="t s" style="left:34.6px;top:622.89px;font-size:5.2px;line-height:5.81px;color:#b8b8b8;font-family:'Liberation Sans',sans-serif;">B...</div>
<div class="t s" style="left:57.4px;top:622.89px;font-size:5.2px;line-height:5.81px;color:#b8b8b8;font-family:'Liberation Sans',sans-serif;">F...</div>
<div class="t s" style="left:80.4px;top:622.89px;font-size:5.2px;line-height:5.81px;color:#b8b8b8;font-family:'Liberation Sans',sans-serif;">Te...</div>
<div class="t s" style="left:491.9px;top:686.93px;font-size:5.6px;line-height:6.26px;color:#303030;font-family:'Liberation Sans',sans-serif;letter-spacing:0.25px;">Simulation</div>
<div class="t s" style="left:649.9px;top:686.79px;font-size:5.2px;line-height:5.81px;color:#202020;font-family:'Liberation Sans',sans-serif;">L:22&nbsp;C:2</div>
<div class="t s" style="left:697px;top:686.79px;font-size:5.2px;line-height:5.81px;color:#8a8a8a;font-family:'Liberation Sans',sans-serif;">CAP</div>
<div class="t s" style="left:709.6px;top:686.79px;font-size:5.2px;line-height:5.81px;color:#8a8a8a;font-family:'Liberation Sans',sans-serif;">NUM</div>
<div class="t s" style="left:725.6px;top:686.79px;font-size:5.2px;line-height:5.81px;color:#8a8a8a;font-family:'Liberation Sans',sans-serif;">SCRL</div>
<div class="t s" style="left:741.8px;top:686.79px;font-size:5.2px;line-height:5.81px;color:#8a8a8a;font-family:'Liberation Sans',sans-serif;">OVR</div>
<div class="t s" style="left:755.8px;top:686.79px;font-size:5.2px;line-height:5.81px;color:#8a8a8a;font-family:'Liberation Sans',sans-serif;">R/W</div>
<div class="t s" style="left:26px;top:698.13px;font-size:5.6px;line-height:6.26px;color:#3a3a3a;font-family:'Liberation Sans',sans-serif;-webkit-text-stroke:0;">27°C</div>
<div class="t s" style="left:26px;top:705.07px;font-size:6.0px;line-height:6.70px;color:#505050;font-family:'Liberation Sans',sans-serif;-webkit-text-stroke:0;">Mostly&nbsp;clear</div>
<div class="t s" style="left:249.2px;top:701.89px;font-size:6.2px;line-height:6.93px;color:#4a4a4a;font-family:'Liberation Sans',sans-serif;-webkit-text-stroke:0;">Search</div>
<div class="t s" style="left:655.8px;top:698.81px;font-size:5.4px;line-height:6.03px;color:#454545;font-family:'Liberation Sans',sans-serif;-webkit-text-stroke:0;">ENG</div>
<div class="t s" style="left:659px;top:705.71px;font-size:5.4px;line-height:6.03px;color:#454545;font-family:'Liberation Sans',sans-serif;-webkit-text-stroke:0;">IN</div>
<div class="t s" style="right:20.100000000000023px;top:697.85px;font-size:5.8px;line-height:6.48px;color:#3a3a3a;font-family:'Liberation Sans',sans-serif;-webkit-text-stroke:0;">01:25</div>
<div class="t s" style="right:20.100000000000023px;top:705.38px;font-size:6.1px;line-height:6.81px;color:#3a3a3a;font-family:'Liberation Sans',sans-serif;-webkit-text-stroke:0;">03-11-2023</div>
</body></html>
